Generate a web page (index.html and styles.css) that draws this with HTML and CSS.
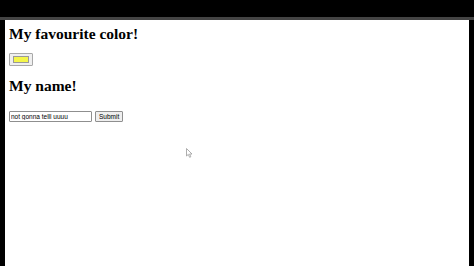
FILE: index.html
```html
<!DOCTYPE html>
<html lang="en">
<head>
    <meta charset="UTF-8">
    <meta name="viewport" content="width=device-width, initial-scale=1.0">
    <title>Document</title>
    <link rel="stylesheet" href="styles.css">
</head>
<body>
    <div class="topbar"></div>
    <div class="page">
        <h1>My favourite color!</h1>
        <input class="color-pick" type="color" value="#f4f64a">
        <h1 class="name-title">My name!</h1>
        <div class="name-row">
            <input class="name-input" type="text" value="not gonna telll uuuu">
            <button class="submit">Submit</button>
        </div>
        <svg class="cursor" width="7" height="10" viewBox="0 0 7 10">
            <path d="M0.5 0.5 L0.5 8 L2.3 6.4 L3.6 9.3 L4.8 8.8 L3.6 6 L6 6 Z" fill="#fff" stroke="#999" stroke-width="0.8"/>
        </svg>
    </div>
</body>
</html>
```

FILE: styles.css
```css
html, body {
    margin: 0;
    height: 100%;
}
body {
    background-color: #000;
    display: flex;
    flex-direction: column;
}
.topbar {
    height: 17px;
    border-bottom: 3px solid #444;
    background-color: #000;
}
.page {
    position: relative;
    flex: 1;
    margin: 0 5px;
    padding: 0 4px;
    background-color: #fff;
    font-family: "Liberation Serif", serif;
}
h1 {
    margin: 4px 0 0 0;
    font-size: 15.5px;
    line-height: 20px;
}
.name-title {
    margin-top: 10px;
}
.color-pick {
    display: block;
    margin: 9px 0 0 0;
    width: 24px;
    height: 13px;
    padding: 2px 3px;
    border: 1px solid #a8a8a8;
    border-radius: 1px;
    background-color: #efefef;
    -webkit-appearance: none;
    appearance: none;
    box-sizing: border-box;
}
.color-pick::-webkit-color-swatch-wrapper {
    padding: 0;
}
.color-pick::-webkit-color-swatch {
    border: 1px solid #999;
    border-radius: 0;
}
.name-row {
    display: flex;
    align-items: center;
    gap: 3px;
    margin-top: 15px;
}
.name-input {
    width: 83px;
    height: 11px;
    margin: 0;
    padding: 0 1px;
    border: 1px solid #8f8f8f;
    border-radius: 1px;
    box-sizing: border-box;
    font-family: "Liberation Sans", sans-serif;
    font-size: 6.5px;
    color: #000;
}
.submit {
    height: 11px;
    margin: 0;
    padding: 0 3px;
    border: 1px solid #8f8f8f;
    border-radius: 1px;
    background-color: #efefef;
    font-family: "Liberation Sans", sans-serif;
    font-size: 6.5px;
    line-height: 9px;
    color: #000;
}
.cursor {
    position: absolute;
    left: 181px;
    top: 128px;
}
```
